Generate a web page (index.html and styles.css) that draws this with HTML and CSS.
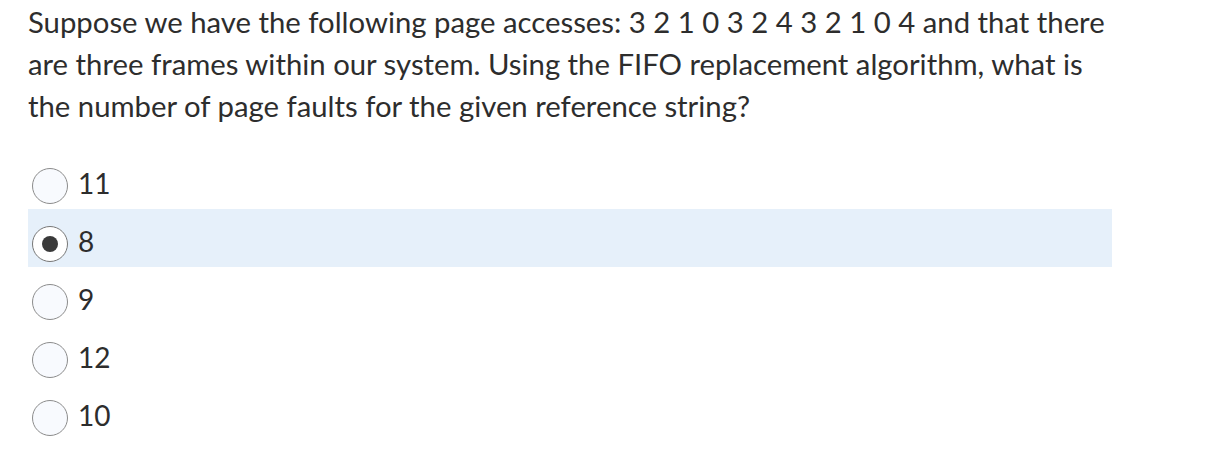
FILE: index.html
```html
<!DOCTYPE html>
<html>
<head>
<meta charset="utf-8">
<link rel="stylesheet" href="styles.css">
</head>
<body>
<div class="quiz">
  <p class="question">Suppose we have the following page accesses: 3 2 1 0 3 2 4 3 2 1 0 4 and that there are three frames within our system. Using the FIFO replacement algorithm, what is the number of page faults for the given reference string?</p>
  <div class="answers">
    <label class="answer"><span class="radio"></span><span class="label">11</span></label>
    <label class="answer selected"><span class="radio checked"></span><span class="label">8</span></label>
    <label class="answer"><span class="radio"></span><span class="label">9</span></label>
    <label class="answer"><span class="radio"></span><span class="label">12</span></label>
    <label class="answer"><span class="radio"></span><span class="label">10</span></label>
  </div>
</div>
</body>
</html>
```
FILE: styles.css
```css
html, body {
  margin: 0;
  padding: 0;
  background: #ffffff;
}
body {
  font-family: Lato, "Noto Sans", sans-serif;
  color: #2d2d2d;
}
.quiz {
  padding: 1px 0 0 28px;
  width: 1090px;
}
.question {
  margin: 0;
  font-size: 29.3px;
  line-height: 42px;
}
.answers {
  margin-top: 24px;
  width: 1084px;
  display: flex;
  flex-direction: column;
}
.answer {
  display: flex;
  align-items: center;
  height: 58px;
  box-sizing: border-box;
  padding: 12px 0 0 4px;
}
.answer.selected {
  background: #e6f0fa;
}
.radio {
  width: 34px;
  height: 34px;
  border: 1px solid #8c8c8c;
  border-radius: 50%;
  background: #f8fafe;
  display: flex;
  align-items: center;
  justify-content: center;
  flex: none;
}
.radio.checked {
  background: #ffffff;
  border-color: #777777;
}
.radio.checked::after {
  content: "";
  width: 16px;
  height: 16px;
  border-radius: 50%;
  background: #3a3a3a;
}
.label {
  margin-left: 10px;
  margin-bottom: 6px;
  font-size: 28px;
  line-height: 36px;
}
```
